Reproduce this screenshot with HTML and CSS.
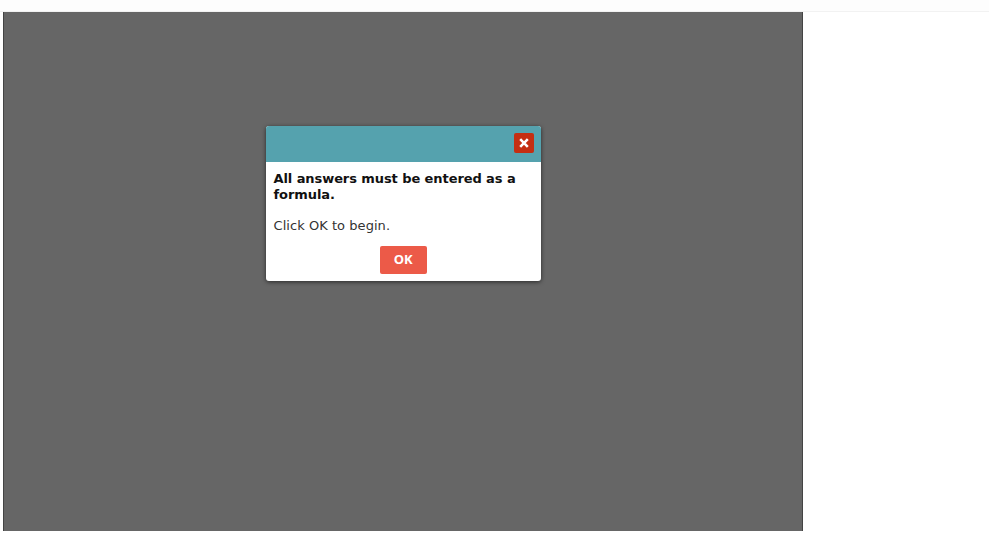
FILE: index.html
```html
<!DOCTYPE html>
<html lang="en">
<head>
	<meta charset="UTF-8">
	<title>Formula</title>
	<link rel="stylesheet" href="styles.css">
</head>
<body>
	<div class="top-bar"></div>
	<div class="stage">
		<div class="modal">
			<div class="modal-head">
				<span class="modal-close" title="Close">
					<svg width="10" height="10" viewBox="0 0 10 10"><path d="M1.2 1.2L8.8 8.8M8.8 1.2L1.2 8.8" stroke="#fff" stroke-width="2.6" fill="none"/></svg>
				</span>
			</div>
			<div class="modal-body">
				<p class="modal-title">All answers must be entered as a formula.</p>
				<p class="modal-text">Click OK to begin.</p>
				<div class="modal-foot"><span class="ok-btn">OK</span></div>
			</div>
		</div>
	</div>
</body>
</html>
```

FILE: styles.css
```css
html, body {
	margin: 0;
	height: 100%;
	background: #fff;
	overflow: hidden;
	font-family: "DejaVu Sans", Verdana, sans-serif;
}

.top-bar {
	height: 11px;
	background: #fdfdfd;
	border-bottom: 1px solid #f2f2f2;
}

.stage {
	position: relative;
	box-sizing: border-box;
	width: 800px;
	height: 519px;
	margin-left: 3px;
	background: #666;
	border-left: 1px solid #444;
	border-right: 1px solid #444;
}

.modal {
	position: absolute;
	top: 114px;
	left: 262px;
	width: 275px;
	height: 155px;
	background: #fff;
	border-radius: 3px;
	box-shadow: 0 1px 4px rgba(0, 0, 0, .6);
	overflow: hidden;
}

.modal-head {
	display: flex;
	justify-content: flex-end;
	align-items: flex-start;
	height: 29px;
	padding: 7px 7px 0 0;
	background: #55a2ae;
}

.modal-close {
	display: flex;
	align-items: center;
	justify-content: center;
	width: 20px;
	height: 20px;
	background: #c42e12;
	border-radius: 2px;
}

.modal-body {
	padding: 9px 8px 0 7.5px;
}

.modal-title {
	margin: 0;
	font-size: 13px;
	line-height: 16px;
	font-weight: bold;
	letter-spacing: -0.08px;
	color: #111;
}

.modal-text {
	margin: 15px 0 0;
	font-size: 13px;
	line-height: 16px;
	letter-spacing: 0.05px;
	color: #333;
}

.modal-foot {
	display: flex;
	justify-content: center;
	margin-top: 12px;
}

.ok-btn {
	width: 47px;
	height: 28px;
	line-height: 27px;
	text-align: center;
	font-family: "Open Sans", sans-serif;
	font-size: 13px;
	font-weight: 700;
	color: #fff;
	background: #ec5a48;
	border-radius: 2px;
}
```
